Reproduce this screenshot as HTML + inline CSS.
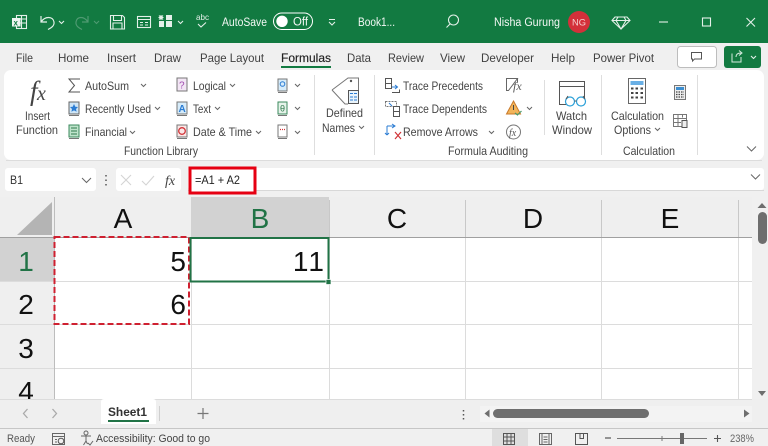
<!DOCTYPE html>
<html><head><meta charset="utf-8"><style>
html,body{margin:0;padding:0;width:768px;height:446px;overflow:hidden;background:#f0f0f0}
svg{display:block;font-family:"Liberation Sans",sans-serif}
.w{fill:#f4f8f5;font-size:11.5px}
.t{fill:#404040;font-size:12px}
.r{fill:#444;font-size:12px}
.h{font-size:28px;fill:#111;text-anchor:middle}
.n{font-size:28px;fill:#111;text-anchor:end;font-kerning:none}
.ws{fill:none;stroke:#e4f0e9;stroke-width:1.1}
.ch{fill:none;stroke:#666;stroke-width:1}
</style></head><body>
<svg width="768" height="446" viewBox="0 0 768 446" xmlns="http://www.w3.org/2000/svg">
<rect width="768" height="446" fill="#f0f0f0"/>
<!-- title bar -->
<rect width="768" height="43" fill="#127a41"/>
<g>
<rect x="16.500" y="15.500" width="10" height="13" class="ws"/><path d="M16.500 19h10M16.500 23h10M21.500 15.500v13" class="ws"/>
<rect x="12" y="18" width="8.500" height="8.500" fill="#eef5f1"/><text x="13.500" y="25.500" font-size="8" font-weight="bold" fill="#127a41">x</text>
<path d="M41 16v6h6M41 22c4-6 12-6 13 0 .5 4-3 6-6 7.500" fill="none" stroke="#e4f0e9" stroke-width="1.200"/>
<path d="M59 21l2.500 2.500 2.500-2.500" class="ws"/>
<path d="M88 16v6h-6M88 22c-4-6-11-6-12 0-.5 4 3 6 6 7.500" fill="none" stroke="#4f9a72" stroke-width="1.200"/>
<path d="M94 21l2.500 2.500 2.500-2.500" fill="none" stroke="#4f9a72" stroke-width="1.100"/>
<path d="M110.500 15.500h12l2 2v11.500h-14zM113.500 15.500v5h8v-5M113 29v-6h9v6" class="ws"/>
<rect x="137.500" y="16.500" width="13" height="11" class="ws"/><path d="M137.500 19.500h13M140 22.500h3M140 25h3M145 22.500h3M145 25h3" class="ws"/>
<path d="M159 15.500l4 4M163 15.500l-4 4M158.500 17.500h5M161 15v5" class="ws"/><rect x="166" y="15" width="6" height="5" fill="#e4f0e9"/><rect x="159" y="21" width="5" height="6" fill="#e4f0e9"/><rect x="166" y="21" width="6" height="6" fill="#e4f0e9"/>
<path d="M178 21l2.500 2.500 2.500-2.500" class="ws"/>
<text x="196" y="20" font-size="8.500" fill="#e4f0e9" textLength="13" lengthAdjust="spacingAndGlyphs">abc</text>
<path d="M198 24l3 3 5-4.500" class="ws"/>
<text x="222" y="26" class="w" textLength="45" lengthAdjust="spacingAndGlyphs">AutoSave</text>
<rect x="273.500" y="13" width="39" height="16.500" rx="8.250" fill="none" stroke="#fff" stroke-width="1"/>
<circle cx="282" cy="21.300" r="5.700" fill="#fff"/>
<text x="293" y="25.500" class="w" textLength="15" lengthAdjust="spacingAndGlyphs">Off</text>
<path d="M329 19.500h6M329 22l3 3 3-3" class="ws"/>
<text x="358" y="26" class="w" textLength="37" lengthAdjust="spacingAndGlyphs">Book1...</text>
<circle cx="453.500" cy="20" r="5" class="ws"/><path d="M450 24l-3.500 3.500" class="ws"/>
<text x="494" y="26" class="w" textLength="66" lengthAdjust="spacingAndGlyphs">Nisha Gurung</text>
<circle cx="579" cy="22" r="11" fill="#d3303a"/>
<text x="572" y="25.500" font-size="9" fill="#f5d0d0" textLength="14" lengthAdjust="spacingAndGlyphs">NG</text>
<path d="M615 17h12l3 3.500-9 8.500-9-8.500zM612 20.500h18M618 17l-2 3.500 5 8.500 5-8.500-2-3.500" fill="none" stroke="#e4f0e9" stroke-width="1.100"/>
<path d="M659 22h9" class="ws"/>
<rect x="702.500" y="18" width="8" height="8" class="ws"/>
<path d="M746.500 18l8.500 8.500M755 18l-8.500 8.500" class="ws"/>
</g>
<!-- tabs -->
<g class="t">
<text x="16" y="62" textLength="17" lengthAdjust="spacingAndGlyphs">File</text>
<text x="58" y="62" textLength="31" lengthAdjust="spacingAndGlyphs">Home</text>
<text x="107" y="62" textLength="29" lengthAdjust="spacingAndGlyphs">Insert</text>
<text x="154" y="62" textLength="27" lengthAdjust="spacingAndGlyphs">Draw</text>
<text x="200" y="62" textLength="64" lengthAdjust="spacingAndGlyphs">Page Layout</text>
<text x="281" y="62" textLength="50" lengthAdjust="spacingAndGlyphs" fill="#222" stroke="#222" stroke-width=".15">Formulas</text>
<text x="347" y="62" textLength="24" lengthAdjust="spacingAndGlyphs">Data</text>
<text x="388" y="62" textLength="36" lengthAdjust="spacingAndGlyphs">Review</text>
<text x="440" y="62" textLength="25" lengthAdjust="spacingAndGlyphs">View</text>
<text x="481" y="62" textLength="53" lengthAdjust="spacingAndGlyphs">Developer</text>
<text x="551" y="62" textLength="24" lengthAdjust="spacingAndGlyphs">Help</text>
<text x="593" y="62" textLength="61" lengthAdjust="spacingAndGlyphs">Power Pivot</text>
</g>
<rect x="281" y="66" width="50" height="2" fill="#127a41"/>
<rect x="677.500" y="46.500" width="39" height="21" rx="3" fill="#fff" stroke="#bdbdbd"/>
<path d="M691.500 52.500h10v6.500h-7l-2 2v-2h-1z" fill="none" stroke="#555"/>
<rect x="724" y="46" width="37" height="22" rx="3" fill="#127a41"/>
<path d="M732 53.500v8.500h9v-5M736 57c0-3 2-4 5-4M739 50.500l3 2.500-3 2.500" fill="none" stroke="#d6ebdf"/>
<path d="M751 56l2.500 2.500 2.500-2.500" class="ws"/>
<!-- ribbon -->
<rect x="4" y="70" width="760" height="90" rx="7" fill="#fff"/>
<rect x="6" y="160" width="756" height="1" fill="#dcdcdc"/>
<g fill="#dedede">
<rect x="314" y="75" width="1" height="80"/><rect x="374" y="75" width="1" height="80"/>
<rect x="544" y="80" width="1" height="55"/><rect x="601" y="75" width="1" height="80"/><rect x="697" y="75" width="1" height="80"/>
</g>
<!-- Function Library -->
<text x="30" y="100" font-family="Liberation Serif,serif" font-style="italic" font-size="27" fill="#444">f</text>
<text x="37" y="100" font-family="Liberation Serif,serif" font-style="italic" font-size="20" fill="#444">x</text>
<g class="r">
<text x="25" y="120" textLength="25" lengthAdjust="spacingAndGlyphs">Insert</text>
<text x="16" y="134" textLength="42" lengthAdjust="spacingAndGlyphs">Function</text>
<text x="85" y="90" textLength="44" lengthAdjust="spacingAndGlyphs">AutoSum</text>
<text x="85" y="113" textLength="66" lengthAdjust="spacingAndGlyphs">Recently Used</text>
<text x="85" y="136" textLength="42" lengthAdjust="spacingAndGlyphs">Financial</text>
<text x="193" y="90" textLength="33" lengthAdjust="spacingAndGlyphs">Logical</text>
<text x="193" y="113" textLength="18" lengthAdjust="spacingAndGlyphs">Text</text>
<text x="193" y="136" textLength="59" lengthAdjust="spacingAndGlyphs">Date &amp; Time</text>
<text x="124" y="155" textLength="74" lengthAdjust="spacingAndGlyphs">Function Library</text>
<text x="326" y="117" textLength="37" lengthAdjust="spacingAndGlyphs">Defined</text>
<text x="322" y="132" textLength="33" lengthAdjust="spacingAndGlyphs">Names</text>
<text x="403" y="90" textLength="80" lengthAdjust="spacingAndGlyphs">Trace Precedents</text>
<text x="403" y="113" textLength="84" lengthAdjust="spacingAndGlyphs">Trace Dependents</text>
<text x="403" y="136" textLength="75" lengthAdjust="spacingAndGlyphs">Remove Arrows</text>
<text x="448" y="155" textLength="80" lengthAdjust="spacingAndGlyphs">Formula Auditing</text>
<text x="556" y="120" textLength="31" lengthAdjust="spacingAndGlyphs">Watch</text>
<text x="552" y="134" textLength="40" lengthAdjust="spacingAndGlyphs">Window</text>
<text x="611" y="120" textLength="53" lengthAdjust="spacingAndGlyphs">Calculation</text>
<text x="614" y="134" textLength="37" lengthAdjust="spacingAndGlyphs">Options</text>
<text x="623" y="155" textLength="52" lengthAdjust="spacingAndGlyphs">Calculation</text>
</g>
<!-- chevrons -->
<path class="ch" d="M141 84l2.500 2.500 2.500-2.500M155 107l2.500 2.500 2.500-2.500M130 131l2.500 2.500 2.500-2.500M230 84l2.500 2.500 2.500-2.500M215 107l2.500 2.500 2.500-2.500M256 131l2.500 2.500 2.500-2.500M295 84l2.500 2.500 2.500-2.500M295 107l2.500 2.500 2.500-2.500M295 131l2.500 2.500 2.500-2.500M359 126l2.500 2.500 2.500-2.500M489 131l2.500 2.500 2.500-2.500M527 107l2.500 2.500 2.500-2.500M655 128l2.500 2.500 2.500-2.500"/>
<!-- small ribbon icons -->
<path d="M80 79h-11l5.500 6.500-5.500 6.500h11" fill="none" stroke="#555" stroke-width="1"/>
<rect x="69" y="102" width="10" height="12" fill="#cfe6f7" stroke="#666"/><path d="M74 104l1.300 2.700 2.700.3-2 2 .6 2.800-2.600-1.400-2.600 1.400.6-2.800-2-2 2.700-.3z" fill="#2b7cd3"/><path d="M69 115.500h10" stroke="#777"/>
<rect x="69" y="125" width="10" height="12" fill="#bfe3cb" stroke="#3b8a5c"/><path d="M71 128h6M71 131h6M71 134h6" stroke="#2f7a4d"/><path d="M69 138.500h10" stroke="#777"/>
<rect x="177" y="78" width="10" height="13" fill="#f3e6f5" stroke="#777"/><text x="179" y="88.500" font-size="10" fill="#a04cb0">?</text>
<rect x="177" y="102" width="10" height="12" fill="#d7ecfa" stroke="#777"/><text x="178.500" y="112" font-size="10" font-weight="bold" fill="#2b7cd3">A</text><path d="M177 115.500h10" stroke="#777"/>
<rect x="177" y="125" width="10" height="12" fill="#fbe7e7" stroke="#777"/><circle cx="182" cy="131" r="3.300" fill="none" stroke="#d13438" stroke-width="1.300"/><path d="M177 138.500h10" stroke="#777"/>
<rect x="278" y="79" width="9" height="12" fill="#d7ecfa" stroke="#777"/><circle cx="282.500" cy="84" r="2.300" fill="none" stroke="#2b7cd3"/><path d="M278 92.500h9" stroke="#777"/>
<rect x="278" y="102" width="9" height="12" fill="#e6f3ea" stroke="#3b8a5c"/><text x="280" y="111.500" font-size="9" fill="#2f7a4d">θ</text><path d="M278 115.500h9" stroke="#777"/>
<rect x="278" y="125" width="9" height="12" fill="#fff" stroke="#777"/><path d="M280 129.500h5" stroke="#d13438" stroke-dasharray="1 1" stroke-width="1.300"/><path d="M278 138.500h9" stroke="#777"/>
<!-- Defined Names icon -->
<path d="M332 90l16-12h10.500v12M332 90l13 14h3" fill="none" stroke="#777"/>
<circle cx="351" cy="81" r="1.200" fill="#555"/>
<rect x="348.500" y="90.500" width="10" height="13" fill="#eaf4fb" stroke="#555"/>
<path d="M350 93.500h3M354 93.500h3M350 97h3M354 97h3M350 100h3M354 100h3" stroke="#2b7cd3"/>
<!-- Trace -->
<rect x="385.500" y="78.500" width="6" height="5" fill="none" stroke="#555"/><rect x="385.500" y="83.500" width="6" height="5" fill="none" stroke="#555"/>
<path d="M392 87h5M395 85l2.500 2-2.500 2" fill="none" stroke="#2b7cd3"/><path d="M392 92.500h7.500v-3" fill="none" stroke="#555"/>
<rect x="385.500" y="101.500" width="11" height="5" fill="none" stroke="#777" stroke-dasharray="2 1"/><path d="M389 103l3 3" stroke="#2b7cd3"/>
<rect x="393.500" y="106.500" width="6" height="5" fill="none" stroke="#555"/><rect x="393.500" y="111.500" width="6" height="5" fill="none" stroke="#555"/>
<path d="M387 126v9M387 135l-2-2M387 135l2-2M387 126h8M392 124l3 2-3 2" fill="none" stroke="#2b7cd3" stroke-width="1"/>
<path d="M395 132l6 7M401 132l-6 7" stroke="#d13438" stroke-width="1.200"/>
<!-- audit icons -->
<path d="M506.500 78.500h11l-9 12h-2zM517.500 78.500v4" fill="none" stroke="#666"/>
<text x="513" y="90" font-family="Liberation Serif,serif" font-style="italic" font-size="12" fill="#555">fx</text>
<path d="M513.500 101l7 13h-14z" fill="#f2b45a" stroke="#c8792a"/><path d="M513.500 105v5" stroke="#444"/><path d="M515 113l2.500 2 4-4" fill="none" stroke="#4a9a6a" stroke-width="1.200"/>
<circle cx="513.500" cy="132" r="7" fill="none" stroke="#777"/><text x="509" y="136" font-family="Liberation Serif,serif" font-style="italic" font-size="10" fill="#555">fx</text>
<!-- Watch window -->
<rect x="559.500" y="81.500" width="25" height="23" fill="#fff" stroke="#555"/><path d="M559.500 86.500h25" stroke="#555"/>
<rect x="566" y="98" width="20" height="10" fill="#fff"/>
<circle cx="570" cy="101.500" r="4.500" fill="#fff" stroke="#2ba0d8" stroke-width="1.200"/><circle cx="581" cy="101.500" r="4.500" fill="#fff" stroke="#2ba0d8" stroke-width="1.200"/>
<path d="M574.500 101h2M566 99l2-3M585 99l-2-3" fill="none" stroke="#555"/>
<!-- Calculator -->
<rect x="628.500" y="78.500" width="17" height="25" fill="#fff" stroke="#666"/><rect x="630.500" y="81" width="13" height="4" fill="#69afe5"/>
<path d="M631 88.500h2.500M635.500 88.500h2.500M640.500 88.500h2.500M631 93h2.500M635.500 93h2.500M640.500 93h2.500M631 97.500h2.500M635.500 97.500h2.500M640.500 97.500h2.500" stroke="#444" stroke-width="2"/>
<rect x="674.500" y="85.500" width="11" height="14" fill="#eee" stroke="#777"/><rect x="676" y="87" width="8" height="3" fill="#3d8fd1"/>
<path d="M676 92h8M676 94.500h8M676 97h8" stroke="#444" stroke-dasharray="1.500 1" stroke-width="1.300"/>
<path d="M673 118.500h14M673 122.500h8M678 114.500v12M682.500 114.500v3" fill="none" stroke="#777"/><rect x="673.500" y="114.500" width="13" height="12" fill="none" stroke="#777"/>
<rect x="682" y="120.500" width="5" height="7" fill="#eee" stroke="#555"/>
<path d="M747 146.500l4.500 4.500 4.500-4.500" class="ch"/>
<!-- formula bar -->
<rect x="5" y="168" width="91" height="23" rx="3" fill="#fff"/>
<text x="10" y="184" font-size="12" fill="#333" textLength="13" lengthAdjust="spacingAndGlyphs">B1</text>
<path d="M82 178l4.500 4.500 4.500-4.500" class="ch"/>
<path d="M106 175v1.500M106 179.500v1.500M106 184v1.500" stroke="#555" stroke-width="1.500"/>
<rect x="116" y="168" width="65" height="23" rx="3" fill="#fff"/>
<path d="M121 175l10 10M131 175l-10 10M142 181l4 4 8-9" fill="none" stroke="#d4d4d4" stroke-width="1.100"/>
<text x="165" y="185" font-family="Liberation Serif,serif" font-style="italic" font-size="14" fill="#444">fx</text>
<rect x="188" y="168" width="576" height="22" rx="3" fill="#fff"/>
<rect x="188" y="190" width="576" height="1" fill="#d8d8d8"/>
<rect x="190" y="168" width="65" height="25" fill="#fff" stroke="#e60012" stroke-width="3"/>
<text x="195" y="184" font-size="12" fill="#222" textLength="45" lengthAdjust="spacingAndGlyphs">=A1 + A2</text>
<path d="M751 174.500l4.500 4.500 4.500-4.500" class="ch"/>
<!-- grid -->
<rect x="0" y="197" width="752" height="41" fill="#efefef"/>
<rect x="191" y="197" width="138" height="41" fill="#d2d2d2"/>
<rect x="0" y="238" width="54" height="161" fill="#efefef"/>
<rect x="0" y="238" width="54" height="43" fill="#d2d2d2"/>
<rect x="54" y="238" width="698" height="161" fill="#fff"/>
<path d="M17 235L52 202V235Z" fill="#b4b4b4"/>
<g fill="#dcdcdc">
<rect x="191" y="238" width="1" height="161"/><rect x="329" y="238" width="1" height="161"/><rect x="465" y="238" width="1" height="161"/><rect x="601" y="238" width="1" height="161"/><rect x="738" y="238" width="1" height="161"/>
<rect x="54" y="281" width="698" height="1"/><rect x="54" y="324" width="698" height="1"/><rect x="54" y="368" width="698" height="1"/>
<rect x="0" y="281" width="54" height="1"/><rect x="0" y="324" width="54" height="1"/><rect x="0" y="368" width="54" height="1"/>
</g>
<g fill="#c8c8c8">
<rect x="329" y="200" width="1" height="38"/><rect x="465" y="200" width="1" height="38"/><rect x="601" y="200" width="1" height="38"/><rect x="738" y="200" width="1" height="38"/>
</g>
<rect x="0" y="237" width="752" height="1" fill="#a0a0a0"/>
<rect x="54" y="197" width="1" height="202" fill="#bdbdbd"/>
<text x="123" y="228" class="h">A</text>
<text x="260" y="228" class="h" style="fill:#217346">B</text>
<text x="397" y="228" class="h">C</text>
<text x="533" y="228" class="h">D</text>
<text x="670" y="228" class="h">E</text>
<text x="26" y="271" class="h" style="fill:#217346">1</text>
<text x="26" y="314" class="h">2</text>
<text x="26" y="358" class="h">3</text>
<svg x="0" y="238" width="54" height="161"><text x="26" y="163" class="h">4</text></svg>
<text x="186" y="271" class="n">5</text>
<text x="186" y="314" class="n">6</text>
<text x="324" y="271" class="n">11</text>
<rect x="54.500" y="237" width="134.500" height="87" fill="none" stroke="#cf2030" stroke-width="2" stroke-dasharray="6 3"/>
<rect x="190.500" y="238" width="138" height="43.500" fill="none" stroke="#217346" stroke-width="2"/>
<rect x="326" y="279.500" width="5" height="5" fill="#217346" stroke="#fff" stroke-width=".7"/>
<!-- vertical scrollbar -->
<rect x="752" y="197" width="16" height="202" fill="#f0f0f0"/>
<path d="M757.500 208l4.500-5 4.500 5z" fill="#6e6e6e"/>
<rect x="758" y="212" width="9" height="32" rx="4.500" fill="#6e6e6e"/>
<path d="M758 391h8l-4 5z" fill="#6e6e6e"/>
<!-- tab bar -->
<rect x="0" y="399" width="768" height="29" fill="#efefef"/>
<rect x="0" y="399" width="752" height="1" fill="#dcdcdc"/>
<path d="M101 424V402q0-3 3-3h49q3 0 3 3v22z" fill="#fff"/>
<text x="108" y="416" font-size="12" font-weight="bold" fill="#333" textLength="39" lengthAdjust="spacingAndGlyphs">Sheet1</text>
<rect x="108" y="420" width="41" height="2" fill="#217346"/>
<rect x="159" y="406" width="1" height="15" fill="#cfcfcf"/>
<path d="M27.500 409l-4 4.500 4 4.500M52.500 409l4 4.500-4 4.500" fill="none" stroke="#aaa" stroke-width="1.300"/>
<path d="M203 408v11M197.500 413.500h11" stroke="#777" stroke-width="1.200"/>
<path d="M463.500 410v1.500M463.500 414v1.500M463.500 418v1.500" stroke="#555" stroke-width="1.500"/>
<rect x="480" y="406" width="272" height="16" fill="#f3f3f3"/>
<path d="M489.500 409.500v8l-5-4z" fill="#6e6e6e"/>
<rect x="493" y="409" width="156" height="9" rx="4.500" fill="#6e6e6e"/>
<path d="M744 409.500v8l5.500-4z" fill="#6e6e6e"/>
<!-- status bar -->
<rect x="0" y="428" width="768" height="1" fill="#c6c6c6"/>
<rect x="0" y="429" width="768" height="17" fill="#f0f0f0"/>
<text x="7" y="442" font-size="11" fill="#555" textLength="28" lengthAdjust="spacingAndGlyphs">Ready</text>
<rect x="52.500" y="433.500" width="12" height="11" fill="none" stroke="#666"/><path d="M52.500 436.500h12M55 439.500h2M55 442h2" stroke="#666"/><circle cx="61" cy="441" r="2.800" fill="#f0f0f0" stroke="#555"/>
<circle cx="86" cy="433" r="2" fill="none" stroke="#666"/><path d="M81 436h10M86 436v5l-2.500 4M86 441l1.500 3M88 443l2 2 3-4" fill="none" stroke="#666"/>
<text x="96" y="442" font-size="11" fill="#444" textLength="114" lengthAdjust="spacingAndGlyphs">Accessibility: Good to go</text>
<rect x="492" y="429" width="36" height="17" fill="#dedede"/>
<path d="M503.500 433.500h11v11h-11zM503.500 437h11M503.500 441h11M507 433.500v11M511 433.500v11" fill="none" stroke="#555"/>
<rect x="539.500" y="433.500" width="12" height="11" fill="none" stroke="#666"/><path d="M542 434v10M549 434v10M543.500 437h4M543.500 439.500h4M543.500 442h4" stroke="#666" fill="none"/>
<path d="M575.500 433.500h12v11h-12zM580 433.500v5h3.500v-5" fill="none" stroke="#555"/>
<path d="M605 438h6" stroke="#555" stroke-width="1.200"/>
<rect x="617" y="438" width="90" height="1" fill="#777"/>
<rect x="661.500" y="436" width="1" height="5" fill="#777"/>
<rect x="680" y="433" width="4" height="11" fill="#666"/>
<path d="M714 438.500h7M717.500 435v7" stroke="#555" stroke-width="1.100"/>
<text x="730" y="442" font-size="11" fill="#666" textLength="24" lengthAdjust="spacingAndGlyphs">238%</text>
</svg>
</body></html>
